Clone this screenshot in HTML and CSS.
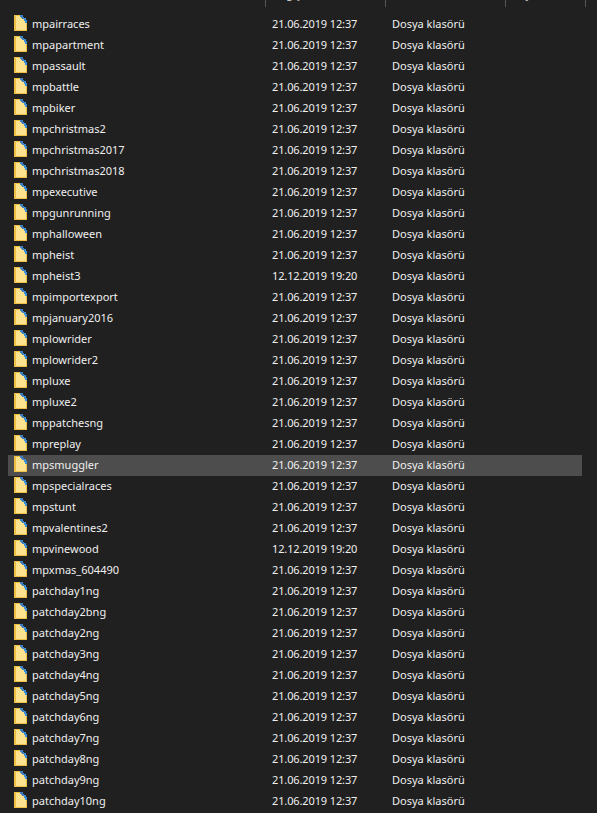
FILE: index.html
```html
<!DOCTYPE html>
<html lang="tr">
<head>
<meta charset="utf-8">
<title>Dosya listesi</title>
<link rel="stylesheet" href="styles.css">
</head>
<body>
<svg class="defs" width="0" height="0" aria-hidden="true">
  <symbol id="folder" viewBox="0 0 13 16">
    <path d="M0 0H7V1H8V2H9V3H10V4H11V5H12V6H13V16H0Z" fill="#eebf45"/>
    <path d="M2 1H6.5L12 6.5V15H2Z" fill="#fde28f"/>
    <path d="M6 0H9V2H10V4H8V3H7V2H6Z" fill="#3f80c2"/>
    <path d="M10 3H12V5H13V8H11V6H10Z" fill="#3d8ed2"/>
  </symbol>
</svg>
<header class="head">
  <div class="hcol date"><span class="clip">Değiştirme tarihi</span></div>
  <div class="hcol type"></div>
  <div class="hcol size"><span class="clip">Boyut</span></div>
</header>
<main class="list" id="list"></main>
<script src="list.js"></script>
</body>
</html>
```
FILE: list.js
```js
const rows = [
  ["mpairraces"],["mpapartment"],["mpassault"],["mpbattle"],["mpbiker"],["mpchristmas2"],
  ["mpchristmas2017"],["mpchristmas2018"],["mpexecutive"],["mpgunrunning"],["mphalloween"],
  ["mpheist"],["mpheist3","12.12.2019 19:20"],["mpimportexport"],["mpjanuary2016"],["mplowrider"],
  ["mplowrider2"],["mpluxe"],["mpluxe2"],["mppatchesng"],["mpreplay"],["mpsmuggler"],
  ["mpspecialraces"],["mpstunt"],["mpvalentines2"],["mpvinewood","12.12.2019 19:20"],["mpxmas_604490"],
  ["patchday1ng"],["patchday2bng"],["patchday2ng"],["patchday3ng"],["patchday4ng"],["patchday5ng"],
  ["patchday6ng"],["patchday7ng"],["patchday8ng"],["patchday9ng"],["patchday10ng"]
];
document.getElementById("list").innerHTML = rows.map(([n, d]) =>
  `<div class="row${n === "mpsmuggler" ? " sel" : ""}">
    <svg class="ico"><use href="#folder"/></svg>
    <span class="n">${n}</span>
    <span class="d">${d || "21.06.2019 12:37"}</span>
    <span class="t">Dosya klasörü</span>
  </div>`).join("");
```
FILE: styles.css
```css
html, body { margin: 0; padding: 0; height: 100%; overflow: hidden; background: #202020; }
body { font: 11px/19px "Noto Sans", sans-serif; color: #efefef; }
.defs { position: absolute; }
.head { display: flex; height: 7px; padding-left: 265px; overflow: hidden; }
.hcol { height: 7px; overflow: hidden; box-sizing: border-box; border-left: 1px solid #555; }
.hcol.date { width: 120px; }
.hcol.type { width: 120px; }
.hcol.size { width: 81px; border-right: 1px solid #555; }
.clip { display: block; margin-top: -16px; padding-left: 6px; white-space: nowrap; color: #d0d0d0; }
.list { padding: 7px 15px 0 8px; }
.row { display: flex; align-items: flex-start; height: 21px; white-space: nowrap; }
.row.sel { background: #4d4d4d; }
.ico { width: 13px; height: 16px; margin: 1px 5px 0 6px; flex: none; }
.n { width: 240px; flex: none; }
.d { width: 120px; flex: none; letter-spacing: -0.12px; }
.t { flex: none; }
```
